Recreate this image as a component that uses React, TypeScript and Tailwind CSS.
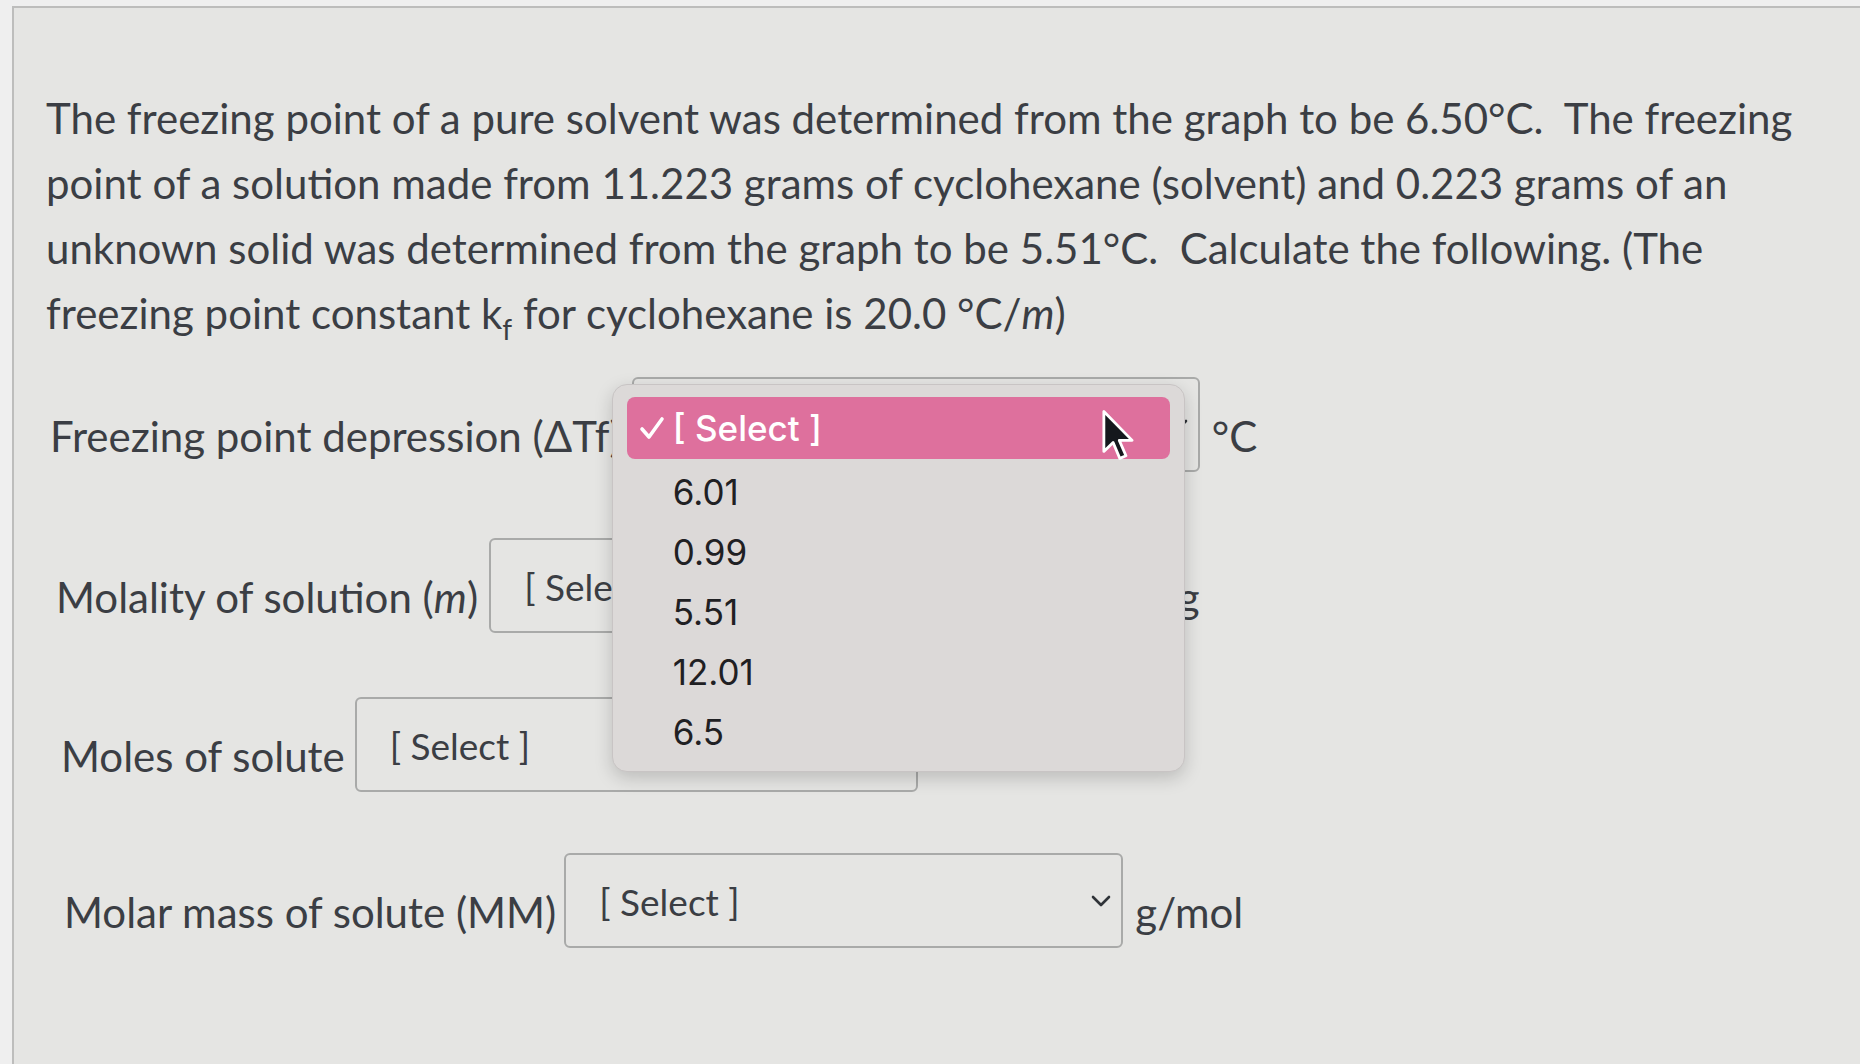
import React from 'react';

const options = ['6.01', '0.99', '5.51', '12.01', '6.5'];

function Chevron() {
  return (
    <svg width="20" height="12" viewBox="0 0 20 12" fill="none" className="shrink-0">
      <path d="M2 2 L10 10 L18 2" stroke="#2f3338" strokeWidth="2.6" strokeLinecap="round" strokeLinejoin="round" />
    </svg>
  );
}

function Cursor() {
  return (
    <svg width="34" height="54" viewBox="0 0 13 21" className="absolute left-[474px] top-[12px]">
      <path
        d="M1 1 L1 16.5 L4.6 13 L7.2 19.2 L9.6 18.2 L7 12.2 L12 12.2 Z"
        fill="#15181d"
        stroke="#ffffff"
        strokeWidth="1.1"
        strokeLinejoin="round"
      />
    </svg>
  );
}

function SelectBox({ width, children }: { width: string; children?: React.ReactNode }) {
  return (
    <div
      className={`relative flex h-[95px] ${width} shrink-0 items-center justify-between rounded-[6px] border-2 border-[#a9aaa9] pl-[33px] pr-[10px]`}
    >
      <span className="mt-[2px] text-[37px] leading-none text-[#3b3e44]">[ Select ]</span>
      <Chevron />
      {children}
    </div>
  );
}

function Dropdown() {
  return (
    <div className="absolute left-[-22px] top-[5px] z-10 h-[388px] w-[573px] rounded-[15px] border border-[#c8c4c4] bg-[#dcd9d8] pt-[12px] shadow-[0_6px_18px_rgba(0,0,0,0.18)]">
      <div className="relative mx-[14px] flex h-[62px] items-center rounded-[8px] bg-[#de709d] pl-[12px] text-white" style={{ fontFamily: 'Inter, "Liberation Sans", sans-serif' }}>
        <svg width="26" height="24" viewBox="0 0 26 24" fill="none" className="mr-[8px] shrink-0">
          <path d="M3 13 L10 21 L23 3" stroke="#ffffff" strokeWidth="3.6" strokeLinecap="round" strokeLinejoin="round" />
        </svg>
        <span className="text-[35px] font-medium">[ Select ]</span>
        <Cursor />
      </div>
      <div className="mt-[3px]" style={{ fontFamily: 'Inter, "Liberation Sans", sans-serif' }}>
        {options.map(o => (
          <div key={o} className="flex h-[60px] items-center pl-[60px] text-[35px] text-[#1f2023]">
            {o}
          </div>
        ))}
      </div>
    </div>
  );
}

export default function App() {
  return (
    <div className="min-h-[1064px] w-[1860px] overflow-hidden bg-[#efefef] pt-[6px]" style={{ fontFamily: 'Lato, "Noto Sans", sans-serif' }}>
      <div className="ml-[12px] min-h-[1058px] border-l-2 border-t-2 border-[#bdbdbc] bg-[#e5e5e3] pl-[32px] pt-[78px] text-[#3b3e44]">
        <p className="whitespace-nowrap text-[42px] leading-[65px]">
          The freezing point of a pure solvent was determined from the graph to be 6.50°C.{'\u00a0'} The freezing
          <br />
          point of a solution made from 11.223 grams of cyclohexane (solvent) and 0.223 grams of an
          <br />
          unknown solid was determined from the graph to be 5.51°C.{'\u00a0'} Calculate the following. (The
          <br />
          freezing point constant k<sub className="text-[28px] align-[-4px]">f</sub> for cyclohexane is 20.0 °C/<i>m</i>)
        </p>

        <div className="mt-[31px] flex flex-col text-[42px] leading-[50px]">
          {/* Freezing point depression */}
          <div className="ml-[4px] flex items-center">
            <span className="mt-[22px] whitespace-nowrap">Freezing point depression (ΔTf)</span>
            <div className="ml-[11px] flex items-center">
              <SelectBox width="w-[568px]">
                <Dropdown />
              </SelectBox>
              <span className="ml-[12px] mt-[22px]">°C</span>
            </div>
          </div>

          {/* Molality */}
          <div className="ml-[10px] mt-[66px] flex items-center">
            <span className="mt-[22px] whitespace-nowrap">
              Molality of solution (<i>m</i>)
            </span>
            <div className="ml-[11px] flex items-center">
              <SelectBox width="w-[568px]" />
              <span className="ml-[12px] mt-[22px]">mol/kg</span>
            </div>
          </div>

          {/* Moles */}
          <div className="ml-[15px] mt-[64px] flex items-center">
            <span className="mt-[22px] whitespace-nowrap">Moles of solute</span>
            <div className="ml-[10px] flex items-center">
              <SelectBox width="w-[563px]" />
              <span className="ml-[12px] mt-[22px]">mol</span>
            </div>
          </div>

          {/* Molar mass */}
          <div className="ml-[18px] mt-[61px] flex items-center">
            <span className="mt-[22px] whitespace-nowrap">Molar mass of solute (MM)</span>
            <div className="ml-[8px] flex items-center">
              <SelectBox width="w-[559px]" />
              <span className="ml-[12px] mt-[22px]">g/mol</span>
            </div>
          </div>
        </div>
      </div>
    </div>
  );
}
